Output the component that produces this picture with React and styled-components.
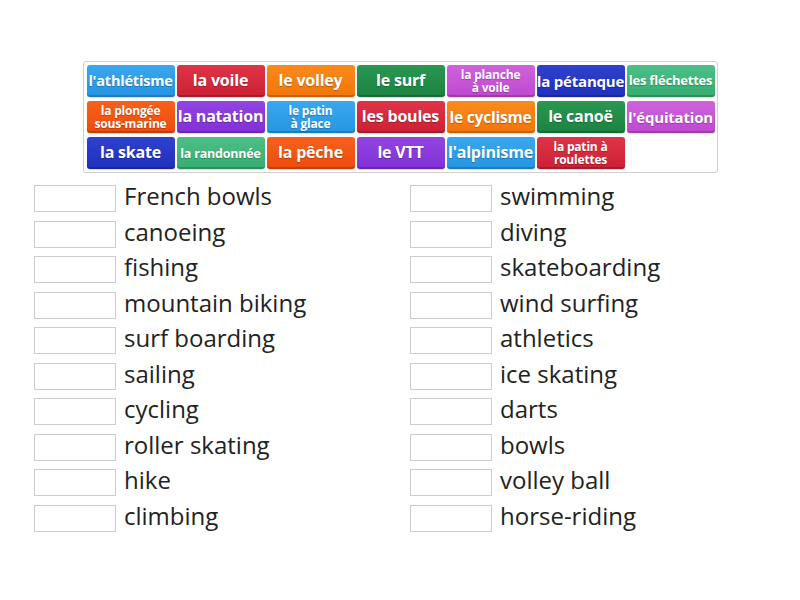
import React from 'react';
import styled, { createGlobalStyle } from 'styled-components';

const GlobalStyle = createGlobalStyle`
  html, body {
    margin: 0;
    padding: 0;
    background: #ffffff;
    font-family: "Open Sans", "Noto Sans", Arial, sans-serif;
  }
`;

const Page = styled.div`
  width: 800px;
  height: 600px;
  padding-top: 61px;
  box-sizing: border-box;
`;

const Board = styled.div`
  width: 635px;
  margin: 0 auto;
  box-sizing: border-box;
  border: 1px solid #cfcfcf;
  border-radius: 3px;
  padding: 3px 2px 3px 3px;
  display: grid;
  grid-template-columns: repeat(7, 88px);
  grid-auto-rows: 32px;
  column-gap: 2px;
  row-gap: 4px;
`;

const palette = {
  blue: ['#3aa7ee', '#2596e3'],
  red: ['#df3447', '#cc2035'],
  orange: ['#fb8a1c', '#f27509'],
  green: ['#2a9852', '#1c8240'],
  pink: ['#cf62dc', '#bf48d0'],
  navy: ['#3041cf', '#1f30bd'],
  teal: ['#4cbf86', '#37ad72'],
  flame: ['#f7611c', '#ee4b0b'],
  violet: ['#9345e3', '#8030d6'],
};

const Tile = styled.div`
  display: flex;
  align-items: center;
  justify-content: center;
  text-align: center;
  border-radius: 3px;
  background: linear-gradient(to bottom, ${(p) => palette[p.$c][0]}, ${(p) => palette[p.$c][1]});
  box-shadow: inset 0 -2px 0 rgba(0, 0, 0, 0.18), 0 1px 1px rgba(0, 0, 0, 0.15);
  color: #ffffff;
  font-weight: 700;
  font-size: ${(p) => p.$fs}px;
  line-height: ${(p) => (p.$fs < 13 ? '13px' : '1.2')};
  letter-spacing: -0.2px;
  white-space: pre-line;
  text-shadow: 0 1px 1px rgba(0, 0, 0, 0.25);
  overflow: hidden;
`;

const Answers = styled.div`
  display: grid;
  grid-template-columns: 376px 376px;
  padding: 12px 0 0 34px;
`;

const Column = styled.div`
  display: flex;
  flex-direction: column;
  gap: 8.5px;
`;

const Row = styled.div`
  display: flex;
  align-items: center;
  gap: 8px;
  height: 27px;
`;

const Slot = styled.div`
  width: 82px;
  height: 27px;
  box-sizing: border-box;
  border: 1px solid #cccccc;
  background: #ffffff;
`;

const Label = styled.span`
  font-size: 24px;
  color: #222222;
  white-space: nowrap;
  line-height: 27px;
  padding-bottom: 6px;
`;

const tiles = [
  ["l'athlétisme", 'blue', 14.5],
  ['la voile', 'red', 16],
  ['le volley', 'orange', 16],
  ['le surf', 'green', 16],
  ['la planche\nà voile', 'pink', 12],
  ['la pétanque', 'navy', 15],
  ['les fléchettes', 'teal', 13],
  ['la plongée\nsous-marine', 'flame', 12],
  ['la natation', 'violet', 16],
  ['le patin\nà glace', 'blue', 12],
  ['les boules', 'red', 16],
  ['le cyclisme', 'orange', 15.5],
  ['le canoë', 'green', 16],
  ["l'équitation", 'pink', 15],
  ['la skate', 'navy', 16],
  ['la randonnée', 'teal', 12.5],
  ['la pêche', 'flame', 16],
  ['le VTT', 'violet', 16],
  ["l'alpinisme", 'blue', 16],
  ['la patin à\nroulettes', 'red', 12],
];

const left = [
  'French bowls',
  'canoeing',
  'fishing',
  'mountain biking',
  'surf boarding',
  'sailing',
  'cycling',
  'roller skating',
  'hike',
  'climbing',
];

const right = [
  'swimming',
  'diving',
  'skateboarding',
  'wind surfing',
  'athletics',
  'ice skating',
  'darts',
  'bowls',
  'volley ball',
  'horse-riding',
];

const App = () => {
  return (
    <Page>
      <GlobalStyle />
      <Board>
        {tiles.map(([text, color, fs], index) => (
          <Tile key={index} $c={color} $fs={fs}>
            {text}
          </Tile>
        ))}
      </Board>
      <Answers>
        {[left, right].map((list, ci) => (
          <Column key={ci}>
            {list.map((item) => (
              <Row key={item}>
                <Slot />
                <Label>{item}</Label>
              </Row>
            ))}
          </Column>
        ))}
      </Answers>
    </Page>
  );
};

export default App;
